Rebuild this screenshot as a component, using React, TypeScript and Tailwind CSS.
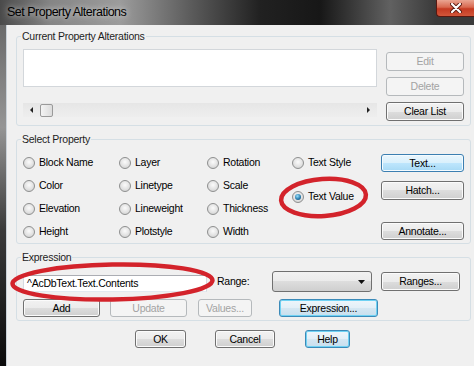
import type { ReactNode } from 'react'

type Variant = 'normal' | 'disabled' | 'hot' | 'default'

const variants: Record<Variant, string> = {
  normal:
    'border-[#707070] bg-[linear-gradient(#f2f2f2,#ebebeb_50%,#dddddd_50%,#cfcfcf)] text-black shadow-[inset_0_0_0_1px_#fbfbfb]',
  disabled: 'border-[#b5b9bc] bg-[#f4f4f4] text-[#a3a3a3]',
  hot: 'border-[#3c7fb1] bg-[linear-gradient(#eaf6fd,#d9f0fc_50%,#bee6fd_50%,#a7d9f5)] text-black shadow-[inset_0_0_0_1px_#f4fbff]',
  default:
    'border-[#3c8ab8] bg-[linear-gradient(#eef6fb,#e3eff7_50%,#d5e7f2_50%,#c8dfee)] text-black shadow-[inset_0_0_0_1px_#70d2f3]',
}

function Btn({ children, v = 'normal', className = '' }: { children: ReactNode; v?: Variant; className?: string }) {
  return (
    <button type="button" className={`flex items-center justify-center rounded-[3px] border leading-none ${variants[v]} ${className}`}>
      {children}
    </button>
  )
}

function Radio({ label, checked, className = '' }: { label: string; checked?: boolean; className?: string }) {
  return (
    <div className={`flex items-center gap-[4px] ${className}`}>
      <span className="flex size-[12px] shrink-0 items-center justify-center rounded-full border border-[#8e8f8f] bg-[radial-gradient(circle_at_50%_40%,#fbfbfb,#e2e2e2_55%,#c9c9c9)]">
        {checked && (
          <span className="size-[6px] rounded-full bg-[radial-gradient(circle_at_40%_35%,#9be0fb,#2a7fb0_55%,#0d3c5e)]" />
        )}
      </span>
      <span>{label}</span>
    </div>
  )
}

function Group({ title, className = '', children }: { title: string; className?: string; children: ReactNode }) {
  return (
    <fieldset className={`rounded-[3px] border border-[#d5dfe5] px-[6px] ${className}`}>
      <legend className="ml-[-2px] px-[1px] leading-[14px] text-[#1e1e1e]">{title}</legend>
      {children}
    </fieldset>
  )
}

const radios = [
  ['Block Name', 'Layer', 'Rotation'],
  ['Color', 'Linetype', 'Scale'],
  ['Elevation', 'Lineweight', 'Thickness'],
  ['Height', 'Plotstyle', 'Width'],
]

export default function App() {
  return (
    <div className="relative flex h-[366px] w-[474px] flex-col overflow-hidden font-['Liberation_Sans',Arial,sans-serif] text-[10.5px] tracking-[-0.25px] text-black">
      {/* title bar */}
      <div className="flex h-[25px] shrink-0 bg-[linear-gradient(90deg,#4a4a4a_0px,#858585_50px,#9c9c9c_120px,#5c5c5c_190px,#212121_260px,#171717_320px,#616161_390px,#3a3a3a_436px)]">
        <span className="pl-[7px] pt-[5px] text-[12.5px] leading-[15px] tracking-[-0.5px] [text-shadow:0_0_6px_rgba(255,255,255,0.8)]">
          Set Property Alterations
        </span>
        <div className="ml-auto flex h-[17px] w-[38px] items-center justify-center rounded-bl-[4px] border border-t-0 border-r-0 border-[#5a1810] bg-[linear-gradient(#eaa592,#d8684f_45%,#c53a22_55%,#d2563a)]">
          <svg width="12" height="10" viewBox="0 0 12 10">
            <path d="M2 1 L10 9 M10 1 L2 9" stroke="#5a1a10" strokeWidth="4" strokeLinecap="round" />
            <path d="M2 1 L10 9 M10 1 L2 9" stroke="#fff" strokeWidth="2.2" strokeLinecap="round" />
          </svg>
        </div>
      </div>

      <div className="flex flex-1">
        {/* left window frame */}
        <div className="w-[7px] shrink-0 border-r border-[#c9d1d8] bg-[linear-gradient(#6a6a6a,#959595_30%,#3a3a3a_60%,#0a0a0a)]" />

        <div className="flex-1 bg-[#f0f0f0] pl-[9px] pr-[3px] pt-[4px]">
          <Group title="Current Property Alterations" className="pb-[4px] pt-[6px]">
            <div className="flex gap-[9px]">
              <div className="flex flex-1 flex-col">
                <div className="h-[38px] border border-[#d3d7db] bg-white" />
                <div className="mt-[16px] flex h-[14px] items-center bg-[linear-gradient(#e6e6e6,#eeeeee)]">
                  <div className="flex w-[17px] justify-center">
                    <svg width="3" height="6" viewBox="0 0 3 6">
                      <path d="M3 0 L0 3 L3 6 Z" fill="#222" />
                    </svg>
                  </div>
                  <div className="h-[13px] w-[13px] rounded-[2px] border border-[#9a9a9a] bg-[linear-gradient(90deg,#f4f4f4,#dcdcdc)]" />
                  <div className="flex-1" />
                  <div className="flex w-[17px] justify-center">
                    <svg width="3" height="6" viewBox="0 0 3 6">
                      <path d="M0 0 L3 3 L0 6 Z" fill="#222" />
                    </svg>
                  </div>
                </div>
              </div>
              <div className="flex w-[78px] flex-col gap-[6px] pt-[3px]">
                <Btn v="disabled" className="h-[19px]">Edit</Btn>
                <Btn v="disabled" className="h-[19px]">Delete</Btn>
                <Btn className="h-[19px]">Clear List</Btn>
              </div>
            </div>
          </Group>

          <Group title="Select Property" className="mt-[6px] pt-[5px]">
            <div className="flex">
              <div className="grid grid-cols-[96px_88px_85px] grid-rows-[repeat(4,23px)] items-center">
                {radios.flatMap((row, r) => row.map((label, c) => <Radio key={`${r}-${c}`} label={label} />))}
              </div>
              <div className="flex flex-1 flex-col">
                <Radio label="Text Style" className="h-[23px]" />
                <Radio label="Text Value" checked className="mt-[16px] h-[14px]" />
              </div>
              <div className="flex w-[83px] flex-col pt-[3px]">
                <Btn v="hot" className="h-[18px]">Text...</Btn>
                <Btn className="mt-[9px] h-[19px]">Hatch...</Btn>
                <Btn className="mt-[22px] h-[18px]">Annotate...</Btn>
              </div>
            </div>
          </Group>

          <Group title="Expression" className="mt-[6px] pb-[3px] pt-[7px]">
            <div className="flex h-[21px] items-end">
              <div className="flex h-[17px] w-[184px] items-center border border-[#abadb3] border-x-[#d5dae0] border-b-[#e3e9ef] bg-white px-[3px]">
                ^AcDbText.Text.Contents
              </div>
              <span className="ml-[10px] w-[55px] self-center">Range:</span>
              <div className="flex h-[21px] w-[100px] items-center justify-end rounded-[3px] border border-[#707070] bg-[linear-gradient(#f2f2f2,#ebebeb_50%,#dddddd_50%,#cfcfcf)] pr-[6px]">
                <svg width="7" height="4" viewBox="0 0 7 4">
                  <path d="M0 0 L7 0 L3.5 4 Z" fill="#111" />
                </svg>
              </div>
              <Btn className="mb-[1px] ml-[9px] h-[19px] w-[79px]">Ranges...</Btn>
            </div>
            <div className="mt-[7px] flex h-[18px]">
              <Btn className="w-[77px]">Add</Btn>
              <Btn v="disabled" className="ml-[10px] w-[77px]">Update</Btn>
              <Btn v="disabled" className="ml-[11px] w-[54px]">Values...</Btn>
              <Btn v="default" className="ml-[27px] w-[99px]">Expression...</Btn>
            </div>
          </Group>

          <div className="ml-[119px] mt-[9px] flex h-[18px]">
            <Btn className="w-[51px]">OK</Btn>
            <Btn className="ml-[29px] w-[60px]">Cancel</Btn>
            <Btn v="default" className="ml-[30px] w-[45px]">Help</Btn>
          </div>
        </div>
      </div>

      {/* red hand-drawn annotations */}
      <svg className="pointer-events-none absolute inset-0" width="474" height="366" viewBox="0 0 474 366">
        <ellipse cx="323.5" cy="197.5" rx="42.5" ry="18.5" transform="rotate(-4 323.5 197.5)" fill="none" stroke="#d3232b" strokeWidth="4.5" />
        <ellipse cx="112.5" cy="282" rx="100" ry="17.5" transform="rotate(-1 112.5 282)" fill="none" stroke="#d3232b" strokeWidth="4.5" />
      </svg>
    </div>
  )
}
